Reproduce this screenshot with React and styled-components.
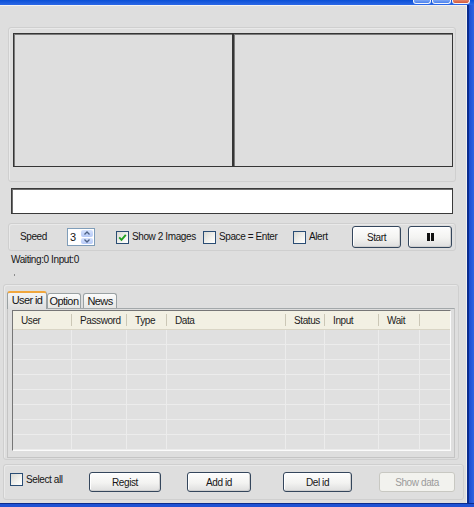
import React from 'react';
import styled, { createGlobalStyle } from 'styled-components';

const Global = createGlobalStyle`
  html, body { margin: 0; padding: 0; background: #dedede; }
  body {
    font-family: "Liberation Sans", Arial, sans-serif;
    font-size: 10px;
    letter-spacing: -0.4px;
    color: #151515;
  }
  * { box-sizing: border-box; }
`;

const Window = styled.div`
  width: 474px;
  height: 507px;
  display: flex;
  flex-direction: column;
  overflow: hidden;
`;

const TitleStrip = styled.div`
  height: 5px;
  flex: none;
  background: linear-gradient(#0a4fd6, #2c68e6);
  display: flex;
  justify-content: flex-end;
  align-items: flex-start;
  gap: 1px;
  padding-right: 4px;
`;

const TitleBtn = styled.div`
  width: ${p => p.$w}px;
  height: 4px;
  border: 1px solid #f2f4fb;
  border-top: none;
  border-radius: 0 0 3px 3px;
  background: ${p => (p.$close ? 'linear-gradient(#e6866a, #d2583a)' : 'linear-gradient(#7ea6f4, #4b82ee)')};
`;

const Middle = styled.div`
  flex: 1;
  display: flex;
  min-height: 0;
`;

const Client = styled.div`
  width: 467px;
  flex: none;
  background: #dedede;
  display: flex;
  flex-direction: column;
  border-right: 1px solid #f1f1f1;
  border-top: 1px solid #f3f3f3;
`;

const RightFrame = styled.div`
  flex: 1;
  background: linear-gradient(90deg, #0b2c8e 0 2px, #1d4fd2 2px, #3066e2);
`;

const BottomFrame = styled.div`
  height: 4px;
  flex: none;
  background: #1f52d4;
  border-top: 1px solid #0b2c8e;
`;

const Group = styled.div`
  border: 1px solid #cfcfcf;
  border-radius: 3px;
  box-shadow: inset 1px 1px 0 #e9e9e9;
`;

const ImagePanel = styled(Group)`
  margin: 21px 0 0 8px;
  width: 448px;
  height: 155px;
  padding: 5px 0 0 4px;
  display: flex;
`;

const ImageBox = styled.div`
  width: 220px;
  height: 134px;
  border: 1px solid #353535;
  box-shadow: inset 1px 1px 0 #7a7a7a;
  background: #dedede;
`;

const TextBox = styled.input`
  margin: 6px 0 0 11px;
  width: 442px;
  height: 26px;
  background: #fff;
  border: 1px solid #3a3a3a;
  box-shadow: inset 1px 1px 0 #6e6e6e;
  outline: none;
  padding: 0 4px;
  font: inherit;
`;

const ControlPanel = styled(Group)`
  margin: 9px 0 0 8px;
  width: 448px;
  height: 28px;
  padding-left: 11px;
  display: grid;
  grid-template-columns: 47px 49px 87px 90px 59px 56px 44px;
  align-items: center;
`;

const Text = styled.span`
  white-space: nowrap;
  line-height: 12px;
`;

const Spinner = styled.div`
  width: 28px;
  height: 18px;
  border: 1px solid #7f9db9;
  background: #fff;
  display: flex;
  align-items: stretch;
  padding: 1px;
`;

const SpinValue = styled.span`
  flex: 1;
  font-size: 11px;
  line-height: 14px;
  padding-left: 1px;
`;

const SpinButtons = styled.div`
  width: 12px;
  display: flex;
  flex-direction: column;
  gap: 1px;
`;

const SpinHalf = styled.div`
  flex: 1;
  border-radius: 2px;
  background: linear-gradient(#d6e2fd, #b5c9f7);
  display: flex;
  align-items: center;
  justify-content: center;
`;

const CheckLabel = styled.label`
  display: inline-flex;
  align-items: center;
  gap: 3px;
  white-space: nowrap;
  line-height: 12px;
`;

const SelectAll = styled(CheckLabel)`
  margin-bottom: 5px;
`;

const Box = styled.span`
  width: 13px;
  height: 13px;
  flex: none;
  border: 1px solid #2a4d74;
  background: linear-gradient(135deg, #d9d9d3, #f7f7f4 70%, #ffffff);
  display: flex;
  align-items: center;
  justify-content: center;
`;

const Button = styled.button`
  width: ${p => p.$w}px;
  height: ${p => p.$h || 20}px;
  padding: 0;
  border: 1px solid ${p => (p.disabled ? '#c8c8c2' : '#34465c')};
  border-radius: 3px;
  background: ${p => (p.disabled ? '#f2f2ee' : 'linear-gradient(#fdfdfd, #f3f3f1 55%, #dedede)')};
  box-shadow: ${p => (p.disabled ? 'none' : 'inset -1px -1px 0 #cfcfcf, inset 1px 1px 0 #ffffff')};
  color: ${p => (p.disabled ? '#9b9b9b' : '#151515')};
  font: inherit;
  letter-spacing: -0.4px;
  display: flex;
  align-items: center;
  justify-content: center;
`;

const Status = styled(Text)`
  margin: 3px 0 0 11px;
  height: 12px;
`;

const Dot = styled.span`
  display: block;
  width: 1px;
  height: 2px;
  background: #8c8c8c;
  margin: 8px 0 0 14px;
`;

const TabGroup = styled(Group)`
  margin: 8px 0 0 3px;
  width: 456px;
  height: 176px;
  padding: 6px 0 0 3px;
  display: flex;
  flex-direction: column;
`;

const TabStrip = styled.div`
  height: 18px;
  display: flex;
  align-items: flex-end;
  position: relative;
  z-index: 1;
`;

const Tab = styled.div`
  width: ${p => p.$w}px;
  height: ${p => (p.$active ? 18 : 15)}px;
  margin-bottom: ${p => (p.$active ? 0 : 1)}px;
  margin-right: ${p => p.$mr || 0}px;
  border: 1px solid #9aa1a3;
  border-bottom: none;
  border-top: ${p => (p.$active ? '2px solid #f0a63c' : '1px solid #9aa1a3')};
  border-radius: 3px 3px 0 0;
  background: ${p => (p.$active ? 'linear-gradient(#f4f4f4, #dedede)' : 'linear-gradient(#fbfbfb, #e6e6e4)')};
  font-size: 11px;
  letter-spacing: -0.6px;
  display: flex;
  align-items: center;
  justify-content: center;
  padding-bottom: ${p => (p.$active ? 2 : 0)}px;
`;

const TabPage = styled.div`
  margin-top: -1px;
  width: 448px;
  height: 150px;
  border: 1px solid #c4c4c4;
  border-top-color: #a3a8aa;
  padding: 1px 0 0 4px;
`;

const List = styled.div`
  width: 439px;
  height: 141px;
  border-top: 1px solid #767676;
  border-left: 1px solid #767676;
  border-right: 1px solid #fbfbfb;
  border-bottom: 1px solid #fbfbfb;
  background: #e0e0e0;
  overflow: hidden;
`;

const HeaderRow = styled.div`
  height: 19px;
  display: flex;
  background: #f2f0e3;
  border-bottom: 1px solid #d9d5c5;
`;

const HeaderCell = styled.div`
  width: ${p => (p.$w ? `${p.$w}px` : 'auto')};
  flex: ${p => (p.$w ? 'none' : 1)};
  padding-left: 8px;
  display: flex;
  align-items: center;
  position: relative;
  color: #1c1c1c;
  &::after {
    content: '';
    display: ${p => (p.$w ? 'block' : 'none')};
    position: absolute;
    right: 0;
    top: 3px;
    bottom: 3px;
    width: 1px;
    background: #cbc7b6;
  }
`;

const Row = styled.div`
  height: 15px;
  display: flex;
  border-bottom: 1px solid #ececec;
`;

const Cell = styled.div`
  width: ${p => (p.$w ? `${p.$w}px` : 'auto')};
  flex: ${p => (p.$w ? 'none' : 1)};
  border-right: ${p => (p.$w ? '1px solid #ececec' : 'none')};
`;

const BottomPanel = styled(Group)`
  margin: 4px 0 0 3px;
  width: 461px;
  height: 36px;
  padding-left: 6px;
  display: grid;
  grid-template-columns: 79px 98px 96px 96px 76px;
  align-items: center;
`;

const columns = [
  { label: 'User', w: 59 },
  { label: 'Password', w: 55 },
  { label: 'Type', w: 40 },
  { label: 'Data', w: 119 },
  { label: 'Status', w: 39 },
  { label: 'Input', w: 54 },
  { label: 'Wait', w: 41 },
  { label: '', w: 0 },
];

const Check = () => (
  <svg width="9" height="9" viewBox="0 0 9 9">
    <polyline points="1.2,4.4 3.5,6.8 7.8,1.8" fill="none" stroke="#21a121" strokeWidth="1.9" />
  </svg>
);

const Chevron = ({ up }) => (
  <svg width="6" height="4" viewBox="0 0 6 4">
    <polyline
      points={up ? '0.5,3.5 3,1 5.5,3.5' : '0.5,0.5 3,3 5.5,0.5'}
      fill="none"
      stroke="#4d6185"
      strokeWidth="1.3"
    />
  </svg>
);

const PauseGlyph = () => (
  <svg width="7" height="8" viewBox="0 0 7 8">
    <rect x="0" y="0" width="3" height="8" fill="#111" />
    <rect x="4" y="0" width="3" height="8" fill="#111" />
  </svg>
);

const CheckItem = ({ checked, children, as: Comp = CheckLabel }) => (
  <Comp>
    <Box>{checked && <Check />}</Box>
    <span>{children}</span>
  </Comp>
);

export default function App() {
  return (
    <>
      <Global />
      <Window>
        <TitleStrip>
          <TitleBtn $w={18} />
          <TitleBtn $w={19} />
          <TitleBtn $w={18} $close />
        </TitleStrip>
        <Middle>
          <Client>
            <ImagePanel>
              <ImageBox />
              <ImageBox />
            </ImagePanel>
            <TextBox type="text" defaultValue="" />
            <ControlPanel>
              <Text>Speed</Text>
              <Spinner>
                <SpinValue>3</SpinValue>
                <SpinButtons>
                  <SpinHalf><Chevron up /></SpinHalf>
                  <SpinHalf><Chevron /></SpinHalf>
                </SpinButtons>
              </Spinner>
              <CheckItem checked>Show 2 Images</CheckItem>
              <CheckItem>Space = Enter</CheckItem>
              <CheckItem>Alert</CheckItem>
              <Button $w={49} $h={22}>Start</Button>
              <Button $w={44} $h={22}><PauseGlyph /></Button>
            </ControlPanel>
            <Status>Waiting:0 Input:0</Status>
            <Dot />
            <TabGroup>
              <TabStrip>
                <Tab $w={40} $active>User id</Tab>
                <Tab $w={34} $mr={2}>Option</Tab>
                <Tab $w={34}>News</Tab>
              </TabStrip>
              <TabPage>
                <List>
                  <HeaderRow>
                    {columns.map((c, i) => (
                      <HeaderCell key={i} $w={c.w}>{c.label}</HeaderCell>
                    ))}
                  </HeaderRow>
                  {Array.from({ length: 8 }).map((_, r) => (
                    <Row key={r}>
                      {columns.map((c, i) => (
                        <Cell key={i} $w={c.w} />
                      ))}
                    </Row>
                  ))}
                </List>
              </TabPage>
            </TabGroup>
            <BottomPanel>
              <CheckItem as={SelectAll}>Select all</CheckItem>
              <Button $w={72}>Regist</Button>
              <Button $w={64}>Add id</Button>
              <Button $w={69}>Del id</Button>
              <Button $w={76} disabled>Show data</Button>
            </BottomPanel>
          </Client>
          <RightFrame />
        </Middle>
        <BottomFrame />
      </Window>
    </>
  );
}
